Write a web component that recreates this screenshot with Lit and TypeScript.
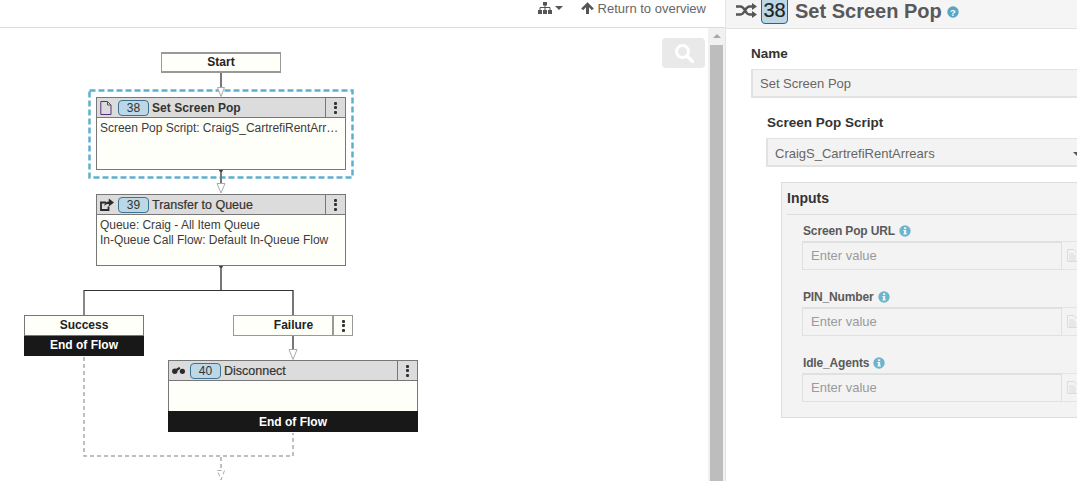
import { LitElement, html, css, svg, nothing } from "lit";
import { customElement, property } from "lit/decorators.js";

const FONT = css`"Liberation Sans", Arial, sans-serif`;

const docIcon = svg`<svg width="12" height="14" viewBox="0 0 12 14"><path d="M7.500 .5 H.8 V13.500 H11 V4" fill="none" stroke="#55307c" stroke-width="1"/><path d="M7.500 .5 V4 H11 Z" fill="none" stroke="#555" stroke-width="1"/></svg>`;
const shareIcon = svg`<svg width="14" height="13" viewBox="0 0 14 13"><path d="M6 4.500 H1 V12 H8.500 V8.500" fill="none" stroke="#2b2b2b" stroke-width="1.800"/><path d="M4 8.500 C4.500 5 6.500 3.500 8.800 3.500 V.5 L14 4.500 L8.800 8.500 V6 C6.800 6 5 6.500 4 8.500 Z" fill="#2b2b2b"/></svg>`;
const disconnectIcon = svg`<svg width="13" height="7" viewBox="0 0 13 7"><circle cx="2.800" cy="4.300" r="2.700" fill="#2b2b2b"/><path d="M3 4 L7.800 .8" stroke="#2b2b2b" stroke-width="2.200" fill="none"/><circle cx="10.400" cy="4.300" r="2.600" fill="#2b2b2b"/></svg>`;

@customElement("flow-node")
class FlowNode extends LitElement {
  static styles = css`
    :host { position: absolute; display: flex; flex-direction: column; box-sizing: border-box; width: 250px; border: 1px solid #777; background: #fffffa; font: 12px ${FONT}; color: #333; }
    .head { display: flex; align-items: center; height: 19px; background: #dcdcdc; border-bottom: 1px solid #777; flex: none; }
    .icon { width: 21px; display: flex; justify-content: flex-start; align-items: center; flex: none; padding-left: 3px; box-sizing: border-box; }
    .badge { box-sizing: border-box; width: 31px; height: 16px; line-height: 14px; text-align: center; background: #bcd8e6; border: 1px solid #3d7391; border-radius: 4px; color: #333; font-size: 12px; flex: none; }
    .title { margin-left: 3px; flex: 1; white-space: nowrap; color: #333; font-size: 12.500px; line-height: 14px; -webkit-text-stroke: 0.2px #333; }
    .sel .title { font-weight: bold; font-size: 12px; letter-spacing: 0.050px; -webkit-text-stroke: 0; }
    .menu { width: 19px; height: 100%; border-left: 1px solid #777; display: flex; flex-direction: column; align-items: center; justify-content: center; gap: 1.500px; flex: none; }
    .menu i { width: 3px; height: 3px; background: #333; border-radius: 1px; display: block; }
    .body { flex: 1; padding: 3px 3px 0 3px; line-height: 15px; white-space: nowrap; overflow: hidden; color: #3c3c3c; letter-spacing: -0.030px; }
    .end { flex: none; height: 21px; margin: 0 -1px -1px; background: #181818; color: #fff; font-weight: bold; text-align: center; line-height: 22px; }
    ::slotted(span) { display: flex; }
  `;
  @property() num = "";
  @property() label = "";
  @property({ type: Boolean }) sel = false;
  @property({ type: Boolean }) end = false;
  render() {
    return html`
      <div class="head ${this.sel ? "sel" : ""}">
        <div class="icon"><slot name="icon"></slot></div>
        <div class="badge">${this.num}</div>
        <div class="title">${this.label}</div>
        <div class="menu"><i></i><i></i><i></i></div>
      </div>
      <div class="body"><slot></slot></div>
      ${this.end ? html`<div class="end">End of Flow</div>` : nothing}
    `;
  }
}

@customElement("app-root")
class AppRoot extends LitElement {
  static styles = css`
    :host { display: block; width: 1077px; height: 481px; overflow: hidden; background: #fff; font: 14px ${FONT}; color: #333; }
    .page { display: flex; width: 1077px; height: 481px; }
    .left { width: 725px; flex: none; display: flex; flex-direction: column; border-right: 1px solid #e4e4e4; box-sizing: content-box; }
    .topbar { height: 28px; box-sizing: border-box; flex: none; border-bottom: 1px solid #dcdcdc; display: flex; justify-content: flex-end; align-items: flex-start; padding: 0 19px 0 0; color: #666; font-size: 13px; }
    .tool { display: flex; align-items: center; height: 16px; }
    .tool.org { margin-right: 18px; }
    .caret { margin-left: 3px; width: 0; height: 0; border-left: 4px solid transparent; border-right: 4px solid transparent; border-top: 4px solid #555; }
    .ret { gap: 4px; color: #666; white-space: nowrap; }
    .work { flex: 1; display: flex; min-height: 0; }
    .canvas { flex: 1; position: relative; overflow: hidden; background: #fff; }
    .wires { position: absolute; left: 0; top: -28px; }
    .search { position: absolute; left: 662px; top: 10px; width: 43px; height: 30px; background: #e9e9e9; border-radius: 4px; display: flex; align-items: center; justify-content: center; }
    .scroll { width: 17px; flex: none; background: #f1f1f1; display: flex; flex-direction: column; align-items: center; padding: 6px 2px 0 2px; box-sizing: border-box; }
    .scroll .up { width: 0; height: 0; border-left: 4px solid transparent; border-right: 4px solid transparent; border-bottom: 4px solid #a8a8a8; }
    .scroll .thumb { margin-top: 7px; width: 13px; flex: 1; background: #bdbdbd; }
    .box { position: absolute; box-sizing: border-box; width: 120px; background: #fffffa; font: bold 12px ${FONT}; color: #222; text-align: center; }
    .box .cap { height: 21px; line-height: 18px; box-sizing: border-box; border: 1px solid #777; }
    .start .cap { border: 1px solid #999; border-width: 2px 1px 2px 1px; line-height: 17px; }
    .box .blk { height: 20px; line-height: 19px; background: #181818; color: #fff; }
    .fail { display: flex; }
    .fail .cap { flex: 1; border-color: #999; padding-left: 21px; }
    .fail .kebab { width: 21px; height: 21px; box-sizing: border-box; border: 1px solid #999; border-left-width: 2px; margin-left: -1px; display: flex; flex-direction: column; align-items: center; justify-content: center; gap: 1.500px; }
    .kebab i { width: 3px; height: 3px; background: #333; border-radius: 1px; display: block; }
    .right { flex: 1; min-width: 0; overflow: hidden; display: flex; flex-direction: column; }
    .phead { height: 29px; flex: none; box-sizing: border-box; background: #f5f5f5; border-bottom: 1px solid #e2e2e2; display: flex; align-items: flex-start; padding-left: 10px; }
    .phead .shuffle { margin-top: 3px; }
    .pbadge { box-sizing: border-box; margin-left: 4px; margin-top: -4px; width: 27px; height: 28px; background: #bcd8e6; border: 1px solid #2f6480; border-radius: 4px; text-align: center; font-size: 20px; line-height: 26px; color: #222; -webkit-text-stroke: 0.2px #222; }
    .ptitle { margin-left: 7px; font-size: 20px; line-height: 22px; font-weight: bold; color: #595959; white-space: nowrap; }
    .phelp { margin-left: 5px; margin-top: 6px; }
    .form { padding: 17px 0 0 25px; width: 360px; box-sizing: content-box; }
    .lbl { font-weight: bold; font-size: 13.500px; line-height: 16px; color: #333; }
    .field { box-sizing: border-box; height: 29px; background: #f3f3f3; border: 2px solid #e2e2e2; border-width: 1px 1px 2px 2px; padding-left: 7px; line-height: 28px; font-size: 13px; color: #666; white-space: nowrap; position: relative; }
    .name { margin-top: 7px; }
    .script { margin: 17px 0 0 15px; }
    .script .lbl { margin-left: 1px; }
    .script .field { margin-top: 7px; display: flex; align-items: center; justify-content: space-between; padding: 3px 60px 0 7px; }
    .selcaret { position: absolute; left: 305px; top: 13px; width: 0; height: 0; border-left: 4px solid transparent; border-right: 4px solid transparent; border-top: 4px solid #555; }
    .inputs { margin: 15px 0 0 30px; box-sizing: border-box; height: 236px; background: #f3f3f3; border: 1px solid #ddd; padding: 8px 0 0 5px; }
    .inputs h3 { margin: 0; font-size: 14px; line-height: 15px; font-weight: bold; color: #333; height: 23px; border-bottom: 1px solid #ddd; }
    .row { margin: 8px 0 0 15px; height: 57px; }
    .row + .row { margin-top: 9px; }
    .row label { display: flex; align-items: center; gap: 4px; height: 16px; margin-left: 1px; font-size: 12px; font-weight: bold; color: #5a5a5a; letter-spacing: -0.150px; }
    .ctl { display: flex; margin-top: 2px; height: 29px; }
    .ctl .val { flex: none; width: 260px; box-sizing: border-box; border: 1px solid #e0e0e0; border-top-width: 2px; background: #f3f3f3; padding-left: 8px; line-height: 26px; font-size: 13px; color: #9a9a9a; }
    .ctl .add { width: 30px; box-sizing: border-box; border: 1px solid #e4e4e4; border-left: none; display: flex; align-items: center; padding-left: 5px; }
  `;

  private info() {
    return html`<svg width="12" height="12" viewBox="0 0 12 12"><circle cx="6" cy="6" r="5.700" fill="#6db4cd"/><rect x="5" y="5" width="2.200" height="4.200" fill="#f3f3f3"/><rect x="4.300" y="8.400" width="3.600" height="1" fill="#f3f3f3"/><rect x="4.300" y="5" width="1.500" height="1" fill="#f3f3f3"/><rect x="5" y="2.300" width="2.200" height="1.800" fill="#f3f3f3"/></svg>`;
  }

  private row(name: string) {
    return html`<div class="row">
      <label>${name} ${this.info()}</label>
      <div class="ctl">
        <div class="val">Enter value</div>
        <div class="add"><svg width="11" height="13" viewBox="0 0 11 13"><path d="M.5 .5 H7 L10.500 4 V12.500 H.5 Z" fill="none" stroke="#dcdcdc"/><path d="M2 5 H7 M2 7 H9 M2 9 H9 M2 11 H9" stroke="#dcdcdc"/></svg></div>
      </div>
    </div>`;
  }

  render() {
    const G = "#777";
    return html`<div class="page">
      <div class="left">
        <div class="topbar">
          <div class="tool org">
            <svg width="14" height="12" viewBox="0 0 14 12"><rect x="5" y="0" width="4" height="3.500" fill="#555"/><rect x="0" y="8" width="4" height="4" fill="#555"/><rect x="5" y="8" width="4" height="4" fill="#555"/><rect x="10" y="8" width="4" height="4" fill="#555"/><path d="M2 8 V5.500 H12 V8 M7 3 V8" fill="none" stroke="#555" stroke-width="1"/></svg>
            <span class="caret"></span>
          </div>
          <div class="tool ret">
            <svg width="13" height="12" viewBox="0 0 13 12"><path d="M6.500 .2 L12.800 6.500 L10.800 8.300 L8 5.300 V12 H5 V5.300 L2.200 8.300 L.2 6.500 Z" fill="#555"/></svg>
            Return to overview
          </div>
        </div>
        <div class="work">
          <div class="canvas">
            <svg class="wires" width="708" height="500" viewBox="0 0 708 500">
              <rect x="89.500" y="90.500" width="263" height="87" fill="none" stroke="#5fb0cc" stroke-width="2.500" stroke-dasharray="6 3"/>
              <g fill="none" stroke="${G}" stroke-width="2">
                <path d="M221 73 V87"/>
                <path d="M221 170 V183"/>
                <path d="M221 266 V290"/>
                <path d="M84 290 V315" stroke="#888"/>
                <path d="M293 290 V315"/>
                <path d="M293 336 V349"/>
              </g>
              <path d="M84 290.500 H293" stroke="#333" stroke-width="1" fill="none"/>
              <circle cx="221" cy="170" r="2" fill="#444"/>
              <circle cx="221" cy="266" r="2" fill="#444"/>
              <g fill="#fff" stroke="#aaa" stroke-width="1">
                <path d="M217.500 87.500 H224.500 L221 96.500 Z" stroke="#aaa"/>
                <path d="M217 183.500 H225 L221 193 Z"/>
                <path d="M289 349.500 H297 L293 359.500 Z"/>
              </g>
              <g fill="none" stroke="#aaa" stroke-width="1.500" stroke-dasharray="4 3">
                <path d="M84 357 V456 H293 V433"/>
                <path d="M221 457 V470"/>
                <path d="M217.500 470.500 H224.500 L221 480 Z" stroke-width="1"/>
              </g>
            </svg>
            <div class="box start" style="left:161px;top:24px"><div class="cap">Start</div></div>

            <flow-node style="left:96px;top:69px;height:73px" num="38" label="Set Screen Pop" sel>
              <span slot="icon">${docIcon}</span>
              Screen Pop Script: CraigS_CartrefiRentArr…
            </flow-node>

            <flow-node style="left:96px;top:166px;height:72px" num="39" label="Transfer to Queue">
              <span slot="icon">${shareIcon}</span>
              Queue: Craig - All Item Queue<br />In-Queue Call Flow: Default In-Queue Flow
            </flow-node>

            <div class="box" style="left:24px;top:287px"><div class="cap">Success</div><div class="blk">End of Flow</div></div>

            <div class="box fail" style="left:233px;top:287px"><div class="cap">Failure</div><div class="kebab"><i></i><i></i><i></i></div></div>

            <flow-node style="left:168px;top:332px;height:72px" num="40" label="Disconnect" end>
              <span slot="icon">${disconnectIcon}</span>
            </flow-node>

            <div class="search">
              <svg width="20" height="20" viewBox="0 0 20 20"><circle cx="8.500" cy="8.500" r="6" fill="none" stroke="#fff" stroke-width="3"/><path d="M13 13 L18.500 18.500" stroke="#fff" stroke-width="3.500" stroke-linecap="round"/></svg>
            </div>
          </div>
          <div class="scroll"><span class="up"></span><div class="thumb"></div></div>
        </div>
      </div>

      <div class="right">
        <div class="phead">
          <svg class="shuffle" width="21" height="15" viewBox="0 0 21 15"><path d="M0 3.500 H4.500 C9 3.500 9 11.500 13.500 11.500 H17 M0 11.500 H4.500 C9 11.500 9 3.500 13.500 3.500 H17" fill="none" stroke="#555" stroke-width="2.500"/><path d="M16 0 L21 3.500 L16 7 Z M16 8 L21 11.500 L16 15 Z" fill="#555"/></svg>
          <div class="pbadge">38</div>
          <div class="ptitle">Set Screen Pop</div>
          <svg class="phelp" width="12" height="12" viewBox="0 0 12 12"><circle cx="6" cy="6" r="5.700" fill="#57a6c4"/><text x="6" y="9.500" text-anchor="middle" font-size="9.500" font-weight="bold" font-family="Liberation Sans" fill="#fff">?</text></svg>
        </div>
        <div class="form">
          <div class="lbl">Name</div>
          <div class="field name">Set Screen Pop</div>
          <div class="script">
            <div class="lbl">Screen Pop Script</div>
            <div class="field">CraigS_CartrefiRentArrears<span class="selcaret"></span></div>
          </div>
          <div class="inputs">
            <h3>Inputs</h3>
            ${this.row("Screen Pop URL")}
            ${this.row("PIN_Number")}
            ${this.row("Idle_Agents")}
          </div>
        </div>
      </div>
    </div>`;
  }
}
